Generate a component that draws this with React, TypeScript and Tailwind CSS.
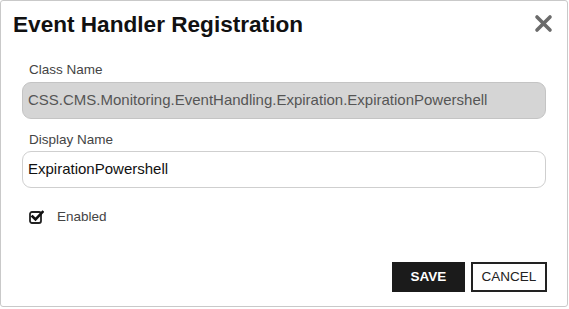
export default function App() {
  return (
    <div className="w-[569px] h-[309px] bg-white font-['Liberation_Sans',Arial,sans-serif]">
      <div className="w-[568px] h-[307px] border border-[#c9c9c9] rounded-[3px] flex flex-col">
        <div className="flex items-start justify-between pl-[12px] pr-[14px] pt-[11px]">
          <h1 className="text-[22.6px] leading-[26px] font-bold text-[#111]">Event Handler Registration</h1>
          <button className="mt-[2px] text-[#6b6b6b]" aria-label="Close">
            <svg width="19" height="19" viewBox="0 0 19 19">
              <path d="M3 3 L16 16 M16 3 L3 16" stroke="currentColor" strokeWidth="3.6" strokeLinecap="round" />
            </svg>
          </button>
        </div>

        <div className="px-[21px] pt-[24px]">
          <label className="block pl-[7px] text-[13.5px] leading-[15px] text-[#444]">Class Name</label>
          <div className="mt-[5px] h-[37px] rounded-[9px] border border-[#c4c4c4] bg-[#d5d5d5] flex items-center px-[5px] text-[15px] text-[#555]">
            CSS.CMS.Monitoring.EventHandling.Expiration.ExpirationPowershell
          </div>

          <label className="block pl-[7px] mt-[13px] text-[13.5px] leading-[15px] text-[#444]">Display Name</label>
          <div className="mt-[4px] h-[37px] rounded-[9px] border border-[#cfcfcf] bg-white flex items-center px-[5px] text-[15px] text-[#111]">
            ExpirationPowershell
          </div>

          <div className="mt-[19px] pl-[7px] flex items-center gap-[13px]">
            <svg width="15" height="15" viewBox="0 0 15 15">
              <rect x="1" y="2" width="11" height="11" rx="2" fill="none" stroke="#222" strokeWidth="1.8" />
              <path d="M3.5 6.5 L6.5 9.5 L13.5 2" fill="none" stroke="#111" strokeWidth="2.6" strokeLinecap="square" />
            </svg>
            <span className="text-[13.5px] text-[#444]">Enabled</span>
          </div>
        </div>

        <div className="mt-auto flex justify-end gap-[6px] pr-[20px] pb-[14px]">
          <button className="w-[73px] h-[30px] bg-[#1b1b1b] text-white text-[13.5px] font-bold border border-[#1b1b1b]">SAVE</button>
          <button className="w-[76px] h-[30px] bg-white text-[#222] text-[13.5px] border-2 border-[#222]">CANCEL</button>
        </div>
      </div>
    </div>
  );
}
